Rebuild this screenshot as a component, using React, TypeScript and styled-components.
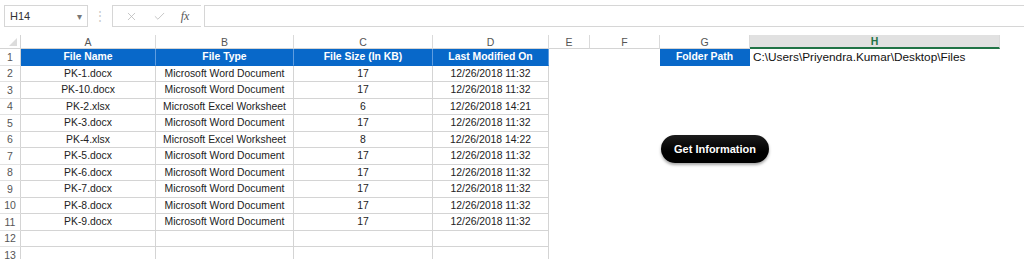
import React from 'react';
import styled, { createGlobalStyle } from 'styled-components';
import { X, Check } from 'lucide-react';

const GlobalStyle = createGlobalStyle`
  body {
    margin: 0;
    background: #ffffff;
    font-family: "Liberation Sans", Arial, sans-serif;
    overflow: hidden;
  }
`;

const COLS = ['A', 'B', 'C', 'D', 'E', 'F', 'G', 'H', ''];
const TABLE_COLS = 4;

const files = [
  ['PK-1.docx', 'Microsoft Word Document', '17', '12/26/2018 11:32'],
  ['PK-10.docx', 'Microsoft Word Document', '17', '12/26/2018 11:32'],
  ['PK-2.xlsx', 'Microsoft Excel Worksheet', '6', '12/26/2018 14:21'],
  ['PK-3.docx', 'Microsoft Word Document', '17', '12/26/2018 11:32'],
  ['PK-4.xlsx', 'Microsoft Excel Worksheet', '8', '12/26/2018 14:22'],
  ['PK-5.docx', 'Microsoft Word Document', '17', '12/26/2018 11:32'],
  ['PK-6.docx', 'Microsoft Word Document', '17', '12/26/2018 11:32'],
  ['PK-7.docx', 'Microsoft Word Document', '17', '12/26/2018 11:32'],
  ['PK-8.docx', 'Microsoft Word Document', '17', '12/26/2018 11:32'],
  ['PK-9.docx', 'Microsoft Word Document', '17', '12/26/2018 11:32'],
  ['', '', '', ''],
  ['', '', '', ''],
];

const App = () => {
  return (
    <Page>
      <GlobalStyle />
      <FormulaBar>
        <NameBox>
          <span>H14</span>
          <Caret>▾</Caret>
        </NameBox>
        <Dots>⋮</Dots>
        <FxButtons>
          <X size={13} strokeWidth={1.4} color="#b5b5b5" />
          <Check size={13} strokeWidth={1.4} color="#b5b5b5" />
          <Fx>fx</Fx>
        </FxButtons>
        <FormulaInput />
      </FormulaBar>

      <Sheet>
        <Corner />
        {COLS.map((c, i) => (
          <ColHead key={i} $active={c === 'H'} $blank={c === ''}>{c}</ColHead>
        ))}

        <RowHead>1</RowHead>
        {['File Name', 'File Type', 'File Size (In KB)', 'Last Modified On'].map((t) => (
          <Cell key={t} $blue $grid>{t}</Cell>
        ))}
        <Cell />
        <Cell />
        <Cell $blue>Folder Path</Cell>
        <PathCell>C:\Users\Priyendra.Kumar\Desktop\Files</PathCell>
        <Cell />

        {files.map((row, i) => (
          <React.Fragment key={i}>
            <RowHead>{i + 2}</RowHead>
            {COLS.map((c, j) => (
              <Cell key={j} $grid={j < TABLE_COLS}>
                {j < TABLE_COLS ? row[j] : ''}
              </Cell>
            ))}
          </React.Fragment>
        ))}

        <InfoButton>Get Information</InfoButton>
      </Sheet>
    </Page>
  );
};

const Page = styled.div`
  width: 1024px;
  height: 259px;
  overflow: hidden;
  background: #fff;
`;

const FormulaBar = styled.div`
  display: flex;
  align-items: center;
  height: 22px;
  padding: 5px 0 0 4px;
  margin-bottom: 8px;
`;

const NameBox = styled.div`
  display: flex;
  align-items: center;
  justify-content: space-between;
  box-sizing: border-box;
  width: 84px;
  height: 22px;
  padding: 0 5px 0 5px;
  border: 1px solid #d6d6d6;
  font-size: 11px;
  color: #333;
`;

const Caret = styled.span`
  font-size: 10px;
  color: #777;
`;

const Dots = styled.span`
  width: 24px;
  text-align: center;
  font-size: 12px;
  color: #c8c8c8;
`;

const FxButtons = styled.div`
  display: flex;
  align-items: center;
  justify-content: space-around;
  box-sizing: border-box;
  width: 89px;
  height: 22px;
  padding: 0 4px;
  border: 1px solid #d6d6d6;
  border-right: none;
`;

const Fx = styled.span`
  font-family: "Liberation Serif", "Times New Roman", serif;
  font-style: italic;
  font-size: 12px;
  color: #555;
`;

const FormulaInput = styled.div`
  flex: 1;
  box-sizing: border-box;
  height: 22px;
  margin-left: 3px;
  border: 1px solid #d6d6d6;
  border-right: none;
`;

const Sheet = styled.div`
  position: relative;
  display: grid;
  grid-template-columns: 21px 135px 138px 139px 116px 41px 70px 90px 250px 24px;
  grid-template-rows: 14px repeat(13, 16.5px);
`;

const Corner = styled.div`
  position: relative;
  border-bottom: 1px solid #d4d4d4;
  border-right: 1px solid #d4d4d4;
  &::after {
    content: '';
    position: absolute;
    right: 3px;
    bottom: 2px;
    border-left: 8px solid transparent;
    border-bottom: 8px solid #dcdcdc;
  }
`;

const ColHead = styled.div<{ $active?: boolean; $blank?: boolean }>`
  display: flex;
  align-items: center;
  justify-content: center;
  box-sizing: border-box;
  font-size: 10.5px;
  color: ${(p) => (p.$active ? '#217346' : '#555')};
  font-weight: ${(p) => (p.$active ? 700 : 400)};
  background: ${(p) => (p.$active ? '#e1e1e1' : '#fff')};
  border-right: 1px solid ${(p) => (p.$blank ? 'transparent' : '#dadada')};
  border-bottom: ${(p) =>
    p.$active ? '2px solid #217346' : p.$blank ? 'none' : '1px solid #d4d4d4'};
`;

const RowHead = styled.div`
  display: flex;
  align-items: center;
  justify-content: center;
  box-sizing: border-box;
  font-size: 10.5px;
  color: #555;
  border-right: 1px solid #d4d4d4;
  border-bottom: 1px solid #e2e2e2;
`;

const Cell = styled.div<{ $blue?: boolean; $grid?: boolean }>`
  display: flex;
  align-items: center;
  justify-content: center;
  box-sizing: border-box;
  padding: 0 3px;
  white-space: nowrap;
  overflow: hidden;
  font-size: 10.4px;
  font-weight: ${(p) => (p.$blue ? 700 : 400)};
  color: ${(p) => (p.$blue ? '#ffffff' : '#222')};
  background: ${(p) => (p.$blue ? '#0868c9' : 'transparent')};
  border-right: 1px solid ${(p) => (p.$grid ? (p.$blue ? '#5f9de0' : '#d4d4d4') : 'transparent')};
  border-bottom: 1px solid ${(p) => (p.$grid ? (p.$blue ? '#0868c9' : '#d4d4d4') : 'transparent')};
`;

const PathCell = styled.div`
  display: flex;
  align-items: center;
  padding: 0 3px;
  white-space: nowrap;
  font-size: 11.8px;
  color: #111;
`;

const InfoButton = styled.div`
  position: absolute;
  left: 661px;
  top: 100px;
  width: 108px;
  height: 28px;
  display: flex;
  align-items: center;
  justify-content: center;
  border-radius: 14px;
  background: linear-gradient(#1c1c1c, #000 60%);
  color: #fff;
  font-size: 11px;
  font-weight: 700;
  box-shadow: 0 2px 3px rgba(0, 0, 0, 0.35);
`;

export default App;
